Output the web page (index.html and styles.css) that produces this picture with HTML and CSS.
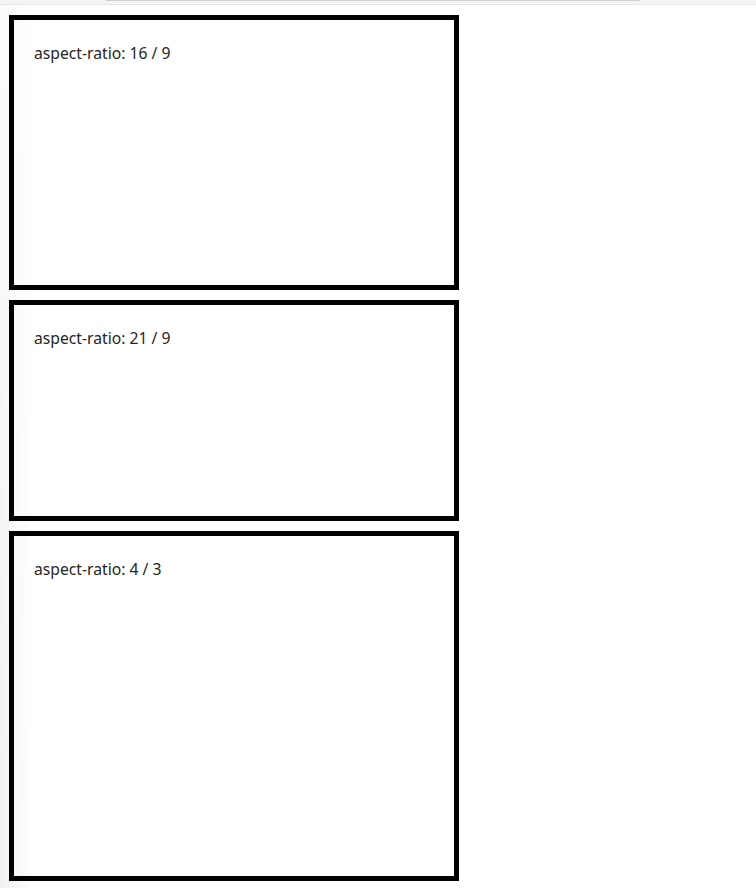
FILE: index.html
```html
<!DOCTYPE html>
<html lang="en">
<head>
<meta charset="utf-8">
<title>aspect-ratio</title>
<link rel="stylesheet" href="styles.css">
</head>
<body>
<div class="topbar"><div class="thumb"></div></div>
<div class="shade"></div>
<main class="stack">
  <div class="box r16x9">aspect-ratio: 16 / 9</div>
  <div class="box r21x9">aspect-ratio: 21 / 9</div>
  <div class="box r4x3">aspect-ratio: 4 / 3</div>
</main>
</body>
</html>
```
FILE: styles.css
```css
html, body {
  margin: 0;
  background: #ffffff;
}
body {
  padding: 15px 0 0 9px;
  font-family: "Noto Sans", "Open Sans", sans-serif;
  font-size: 15.7px;
  color: #262626;
}
.stack {
  display: flex;
  flex-direction: column;
  align-items: flex-start;
  gap: 10px;
}
.box {
  width: 400px;
  padding: 20px;
  border: 5px solid #000000;
  box-sizing: content-box;
  line-height: 26px;
}
.r16x9 { aspect-ratio: 16 / 9; }
.r21x9 { aspect-ratio: 21 / 9; }
.r4x3 { aspect-ratio: 4 / 3; }

.topbar {
  position: fixed;
  top: 0;
  left: 0;
  right: 0;
  height: 4px;
  background: #f4f4f4;
  border-bottom: 1px solid #e6e6e6;
}
.topbar .thumb {
  position: absolute;
  left: 106px;
  width: 534px;
  top: 0;
  height: 1px;
  background: #cfcfcf;
  border-radius: 0 0 2px 2px;
}
.shade {
  position: fixed;
  top: 5px;
  left: 0;
  bottom: 0;
  width: 34px;
  pointer-events: none;
  background: linear-gradient(to right, rgba(0,0,0,0.06), rgba(0,0,0,0));
  -webkit-mask-image: linear-gradient(to bottom, rgba(0,0,0,0.3), rgba(0,0,0,1));
  mask-image: linear-gradient(to bottom, rgba(0,0,0,0.3), rgba(0,0,0,1));
}
```
